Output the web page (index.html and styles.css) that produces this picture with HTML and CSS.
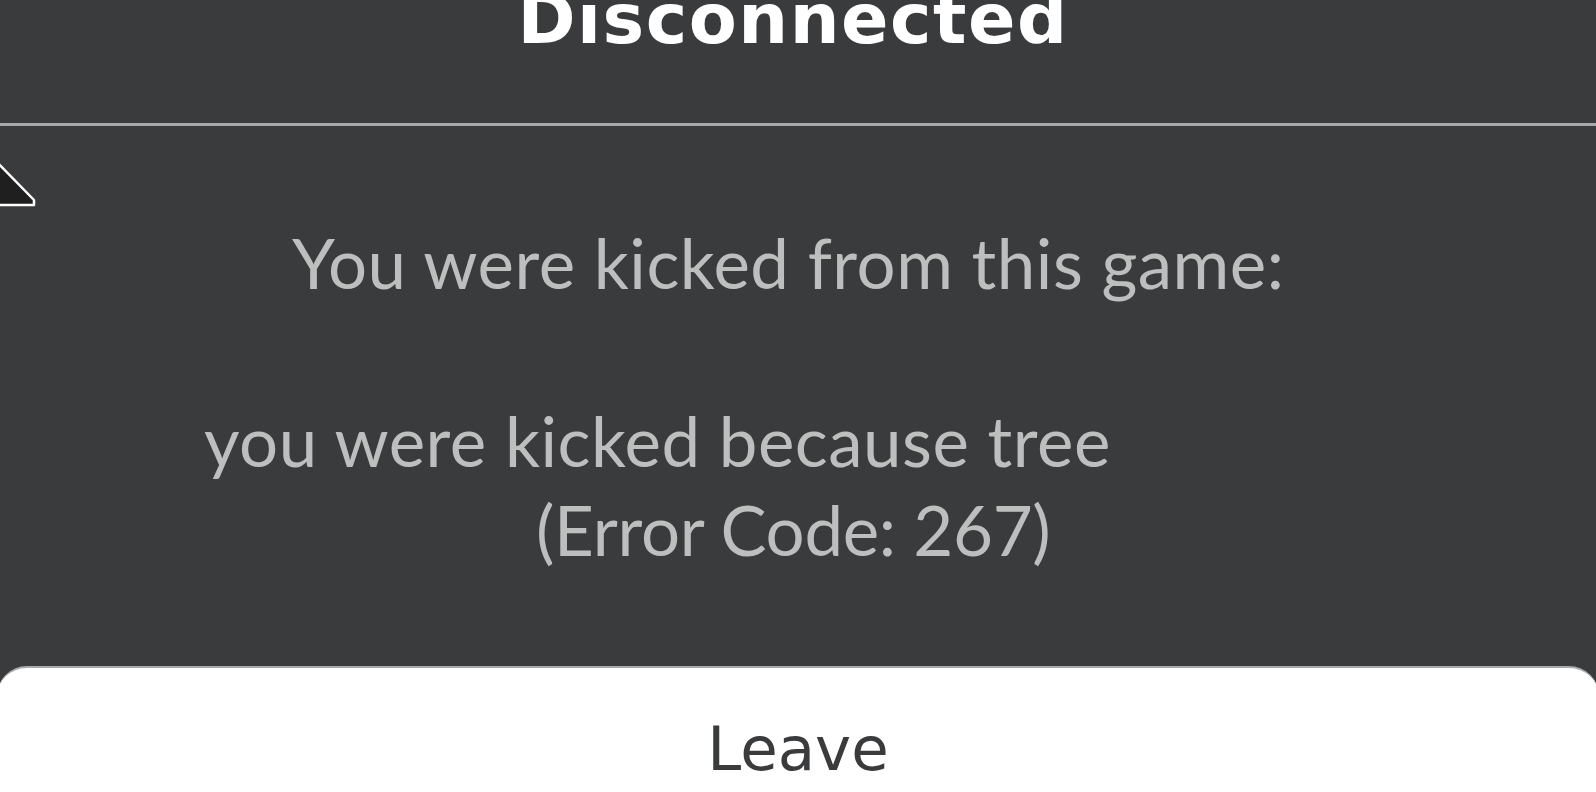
FILE: index.html
```html
<!DOCTYPE html>
<html lang="en">
<head>
  <meta charset="UTF-8" />
  <meta name="viewport" content="width=device-width, initial-scale=1.0"/>
  <title>Disconnected</title>
  <link rel="stylesheet" href="styles.css">
</head>
<body>
  <div class="prompt">
    <div class="prompt-header">
      <h1>Disconnected</h1>
    </div>

    <svg class="corner-icon" width="44" height="60" viewBox="0 0 44 60">
      <polygon points="-12,1 34,48 34,53 -12,53" fill="#1f1f1f" stroke="#ffffff" stroke-width="2.5" stroke-linejoin="round" />
    </svg>

    <div class="message">
      <p class="line line-intro">You were kicked from this game:</p>
      <p class="line line-blank">&nbsp;</p>
      <p class="line line-reason">you were kicked because tree</p>
      <p class="line line-code">(Error Code: 267)</p>
    </div>

    <button type="button" class="leave-btn">Leave</button>
  </div>
</body>
</html>
```

FILE: styles.css
```css
* {
  box-sizing: border-box;
  margin: 0;
  padding: 0;
}

html, body {
  height: 100%;
  overflow: hidden;
}

body {
  background-color: #393b3d;
  font-family: 'Lato', 'Liberation Sans', sans-serif;
  color: #fff;
}

.prompt {
  position: relative;
  width: 100%;
}

.prompt-header {
  display: flow-root;
  height: 126px;
  border-bottom: 3px solid #a7a8a9;
  text-align: center;
}

h1 {
  font-family: 'DejaVu Sans', sans-serif;
  font-weight: bold;
  font-size: 70px;
  line-height: 70px;
  letter-spacing: 1.5px;
  margin-top: -16px;
  padding-right: 10px;
  color: #ffffff;
}

.corner-icon {
  position: absolute;
  left: 0;
  top: 152px;
}

.message {
  padding-top: 92px;
  padding-bottom: 92px;
  color: #bdbebe;
  font-size: 69px;
  line-height: 89px;
  letter-spacing: 0.5px;
  white-space: nowrap;
}

.line-intro {
  padding-left: 292px;
}

.line-reason {
  padding-left: 204px;
}

.line-code {
  padding-left: 536px;
  letter-spacing: -0.3px;
}

.leave-btn {
  display: block;
  width: 1602px;
  margin-left: -3px;
  padding-top: 44px;
  padding-bottom: 90px;
  background-color: #ffffff;
  border: none;
  border-top: 2px solid #a9aaab;
  border-radius: 30px;
  font-family: 'DejaVu Sans', sans-serif;
  font-size: 61px;
  line-height: 1.2;
  color: #393b3d;
  text-align: center;
  cursor: pointer;
}
```
